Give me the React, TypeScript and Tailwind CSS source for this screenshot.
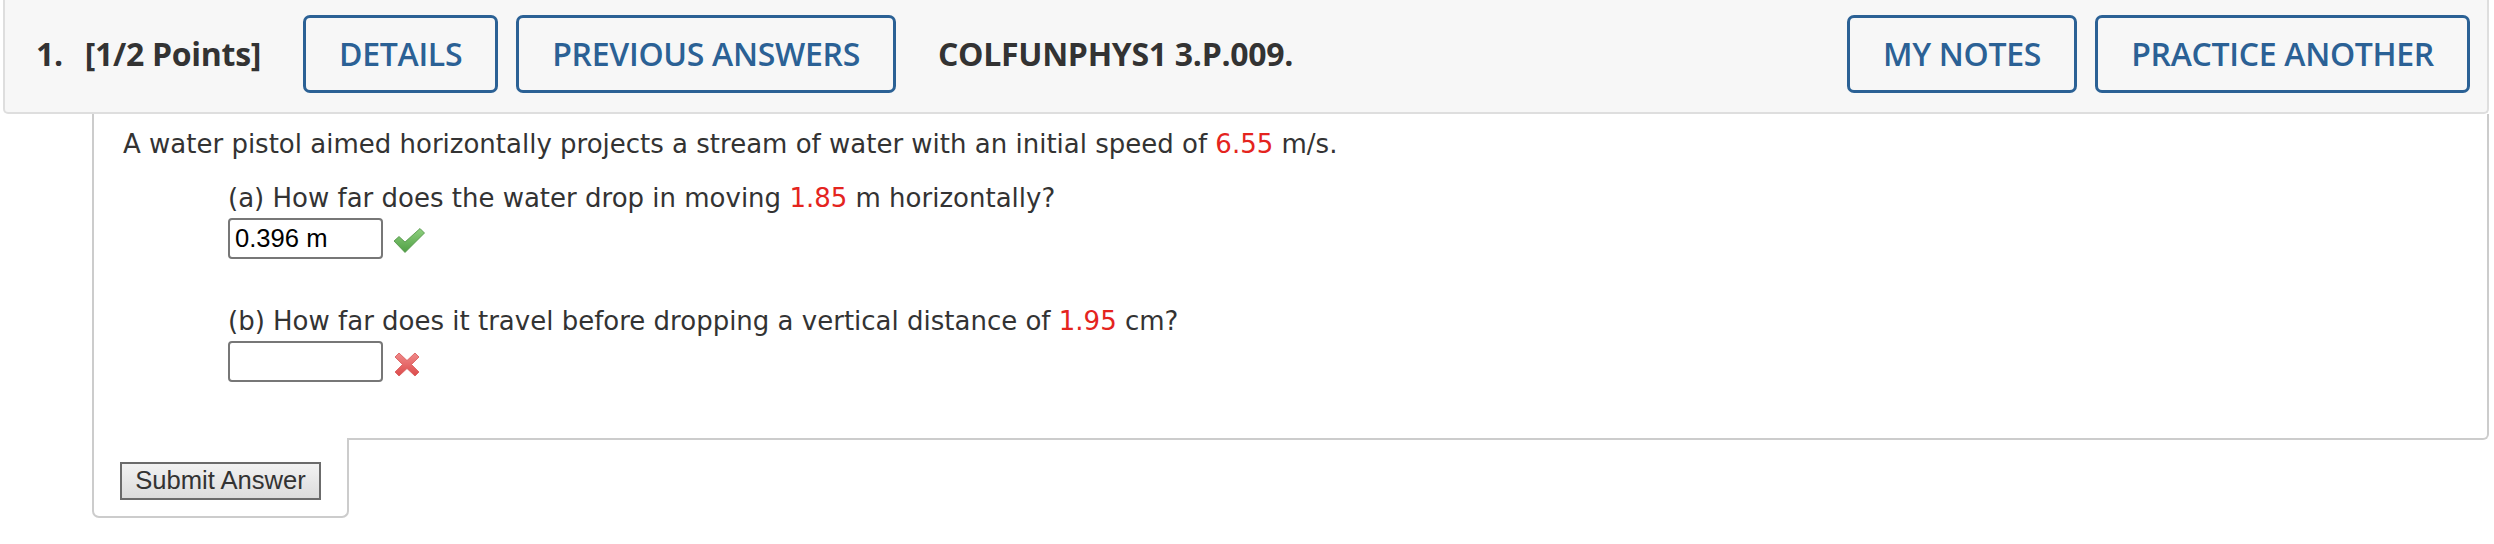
const headerFont = { fontFamily: '"Open Sans", "Noto Sans", sans-serif' };

function OutlineButton({ label }: { label: string }) {
  return (
    <button
      type="button"
      className="h-[78px] px-[33px] border-[3px] border-[#2b6195] rounded-[7px] text-[#2b6195] text-[32px] font-semibold leading-none tracking-[-0.3px]"
    >
      {label}
    </button>
  );
}

function Num({ children }: { children: string }) {
  return <span className="text-[#e4241e]">{children}</span>;
}

function CheckMark() {
  return (
    <svg width="32" height="26" viewBox="0 0 32 26" className="ml-[10px] mt-[10px]">
      <defs>
        <linearGradient id="ck" x1="0" y1="0" x2="0" y2="1">
          <stop offset="0" stopColor="#8fd07f" />
          <stop offset="1" stopColor="#4f9f44" />
        </linearGradient>
      </defs>
      <path
        d="M1 13 L6 8.5 L12 14 L27 0.5 L31.5 5 L12 24.5 Z"
        fill="url(#ck)"
        stroke="#4c8f43"
        strokeWidth="0.8"
        strokeLinejoin="round"
      />
    </svg>
  );
}

function CrossMark() {
  return (
    <svg width="28" height="27" viewBox="0 0 28 27" className="ml-[10px] mt-[10px]">
      <defs>
        <linearGradient id="cx" x1="0" y1="0" x2="0" y2="1">
          <stop offset="0" stopColor="#f08a8a" />
          <stop offset="1" stopColor="#dc4b4b" />
        </linearGradient>
      </defs>
      <path
        d="M2 6 L6 2 L14 9.5 L22 2 L26 6 L18.5 13.5 L26 21 L22 25 L14 17.5 L6 25 L2 21 L9.5 13.5 Z"
        fill="url(#cx)"
        stroke="#d75656"
        strokeWidth="0.8"
        strokeLinejoin="round"
      />
    </svg>
  );
}

function AnswerBox({ value }: { value: string }) {
  return (
    <div
      className="w-[155px] h-[41px] border-2 border-[#777] rounded-[4px] bg-white pl-[5px] text-[25.6px] leading-[37px] text-black"
      style={{ fontFamily: '"Liberation Sans", Arial, sans-serif' }}
    >
      {value}
    </div>
  );
}

export default function App() {
  return (
    <div className="w-[2494px] h-[544px] bg-white overflow-hidden">
      <div
        className="ml-[3px] w-[2486px] h-[114px] bg-[#f7f7f7] border-2 border-t-0 border-[#dedede] rounded-b-[5px] flex items-start pt-[15px] pl-[31px] pr-[17px]"
        style={headerFont}
      >
        <div className="h-[78px] flex items-center text-[32px] font-bold text-[#333] leading-none tracking-[-0.3px]">
          <span>1.</span>
          <span className="ml-[22px]">[1/2 Points]</span>
        </div>
        <div className="ml-[42px] flex gap-[18px]">
          <OutlineButton label="DETAILS" />
          <OutlineButton label="PREVIOUS ANSWERS" />
        </div>
        <div className="ml-[42px] h-[78px] flex items-center text-[32px] font-bold text-[#333] leading-none tracking-[-0.3px]">
          COLFUNPHYS1 3.P.009.
        </div>
        <div className="ml-auto flex gap-[18px]">
          <OutlineButton label="MY NOTES" />
          <OutlineButton label="PRACTICE ANOTHER" />
        </div>
      </div>

      <div
        className="ml-[92px] w-[2397px] text-[#333] text-[26px] leading-[32px]"
        style={{ fontFamily: '"DejaVu Sans", Verdana, sans-serif' }}
      >
        <div className="border-l-2 border-r-2 border-b-2 border-[#cccccc] rounded-br-[6px] pl-[29px] pt-[14px] pb-[56px]">
          <p>
            A water pistol aimed horizontally projects a stream of water with an initial speed of{' '}
            <Num>6.55</Num> m/s.
          </p>
          <div className="ml-[105px] mt-[22px]">
            <p>
              (a) How far does the water drop in moving <Num>1.85</Num> m horizontally?
            </p>
            <div className="mt-[4px] flex items-start">
              <AnswerBox value="0.396 m" />
              <CheckMark />
            </div>
            <p className="mt-[46px]">
              (b) How far does it travel before dropping a vertical distance of <Num>1.95</Num> cm?
            </p>
            <div className="mt-[4px] flex items-start">
              <AnswerBox value="" />
              <CrossMark />
            </div>
          </div>
        </div>
        <div className="relative -mt-[2px] w-[257px] bg-white border-l-2 border-r-2 border-b-2 border-[#cccccc] rounded-b-[7px] pt-[24px] pb-[16px] pl-[26px]">
          <button
            type="button"
            className="w-[201px] h-[38px] border-2 border-[#6b6b6b] bg-gradient-to-b from-[#f2f2f2] to-[#dcdcdc] text-[#333] text-[25.6px] leading-none"
            style={{ fontFamily: '"Liberation Sans", Arial, sans-serif' }}
          >
            Submit Answer
          </button>
        </div>
      </div>
    </div>
  );
}
